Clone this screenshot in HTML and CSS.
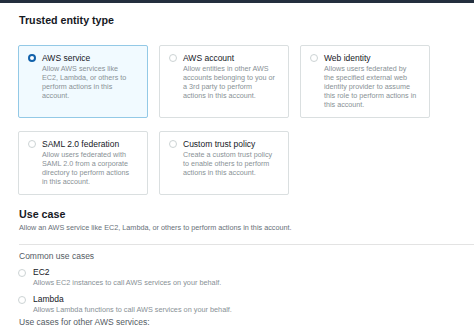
FILE: index.html
```html
<!DOCTYPE html>
<html lang="en">
<head>
<meta charset="UTF-8">
<meta name="viewport" content="width=device-width, initial-scale=1.0">
<title>Select trusted entity</title>
<link rel="stylesheet" href="styles.css">
</head>
<body>
<div class="topbar"></div>
<div class="page">
  <h2 class="section-title">Trusted entity type</h2>
  <div class="tiles">
    <div class="tile selected">
      <span class="radio"></span>
      <div class="tile-body">
        <div class="tile-title">AWS service</div>
        <div class="tile-desc">Allow AWS services like<br>EC2, Lambda, or others to<br>perform actions in this<br>account.</div>
      </div>
    </div>
    <div class="tile">
      <span class="radio"></span>
      <div class="tile-body">
        <div class="tile-title">AWS account</div>
        <div class="tile-desc">Allow entities in other AWS<br>accounts belonging to you or<br>a 3rd party to perform<br>actions in this account.</div>
      </div>
    </div>
    <div class="tile">
      <span class="radio"></span>
      <div class="tile-body">
        <div class="tile-title">Web identity</div>
        <div class="tile-desc">Allows users federated by<br>the specified external web<br>identity provider to assume<br>this role to perform actions in<br>this account.</div>
      </div>
    </div>
    <div class="tile">
      <span class="radio"></span>
      <div class="tile-body">
        <div class="tile-title">SAML 2.0 federation</div>
        <div class="tile-desc">Allow users federated with<br>SAML 2.0 from a corporate<br>directory to perform actions<br>in this account.</div>
      </div>
    </div>
    <div class="tile">
      <span class="radio"></span>
      <div class="tile-body">
        <div class="tile-title">Custom trust policy</div>
        <div class="tile-desc">Create a custom trust policy<br>to enable others to perform<br>actions in this account.</div>
      </div>
    </div>
  </div>

  <h2 class="section-title use-case">Use case</h2>
  <p class="section-sub">Allow an AWS service like EC2, Lambda, or others to perform actions in this account.</p>
  <hr class="divider">

  <div class="group-label">Common use cases</div>
  <div class="option first">
    <span class="radio"></span>
    <div>
      <div class="option-title">EC2</div>
      <div class="option-desc">Allows EC2 instances to call AWS services on your behalf.</div>
    </div>
  </div>
  <div class="option">
    <span class="radio"></span>
    <div>
      <div class="option-title">Lambda</div>
      <div class="option-desc">Allows Lambda functions to call AWS services on your behalf.</div>
    </div>
  </div>
  <div class="group-label other">Use cases for other AWS services:</div>
</div>
</body>
</html>
```

FILE: styles.css
```css
body {
  margin: 0;
  font-family: "Liberation Sans", Arial, sans-serif;
  color: #16191f;
  background: #fff;
}
.topbar {
  height: 3px;
  background: #232f3e;
}
.page {
  padding-left: 18px;
}
.section-title {
  margin: 11px 0 0 1px;
  font-size: 10.7px;
  line-height: 13px;
  font-weight: bold;
}
.section-title.use-case {
  margin-top: 13px;
}
.tiles {
  display: grid;
  grid-template-columns: repeat(3, 130px);
  gap: 13px 11px;
  margin-top: 18px;
}
.tile {
  display: flex;
  gap: 6px;
  padding: 7px 6px 8px 9px;
  border: 1px solid #dadfe0;
  border-radius: 2px;
}
.tile.selected {
  background: #f1faff;
  border-color: #93c9e6;
}
.radio {
  flex: none;
  width: 8px;
  height: 8px;
  box-sizing: border-box;
  border: 1px solid #ccd3d4;
  border-radius: 50%;
  background: #fff;
  margin-top: 1px;
}
.selected .radio {
  border: 2.5px solid #1262ab;
}
.tile-title {
  font-size: 8.5px;
  line-height: 11px;
}
.tile-desc {
  font-size: 7.2px;
  line-height: 9px;
  color: #899196;
  white-space: nowrap;
}
.section-sub {
  margin: 2px 0 0 1px;
  font-size: 7.25px;
  line-height: 9px;
  color: #687078;
}
.divider {
  margin: 12px 0 0 1px;
  border: 0;
  border-top: 1px solid #e3e3e3;
}
.group-label {
  margin: 6px 0 0 1px;
  font-size: 8.5px;
  line-height: 11px;
  color: #545b64;
}
.group-label.other {
  margin-top: 3px;
}
.option {
  display: flex;
  gap: 7px;
  margin-top: 7px;
}
.option.first {
  margin-top: 5px;
}
.option .radio {
  margin-top: 2px;
}
.option-title {
  font-size: 8.5px;
  line-height: 11px;
}
.option-desc {
  font-size: 7.3px;
  line-height: 9px;
  color: #899196;
}
```
